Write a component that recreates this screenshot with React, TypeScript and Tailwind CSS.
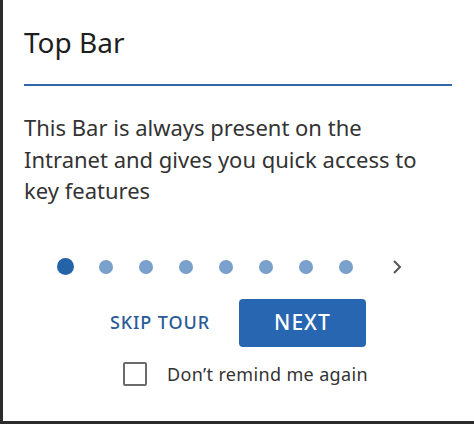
import { useState } from "react";

const font = { fontFamily: '"Noto Sans", "Open Sans", Arial, sans-serif' };

export default function App() {
    const [remind, setRemind] = useState(false);
    const dots = [0, 1, 2, 3, 4, 5, 6, 7];

    return (
        <div
            className="w-[474px] h-[424px] bg-white border-l-[3px] border-b-[3px] border-[#2b2b2b] pl-[21px] pr-[22px] text-[#2a2a2a]"
            style={font}
        >
            {/* Header */}
            <h2 className="pt-[22px] text-[28px] leading-[40px] text-[#1e1e1e]">Top Bar</h2>
            <div className="mt-[22px] h-[2px] bg-[#2f67a8]" />

            {/* Body */}
            <p className="mt-[26px] max-w-[412px] text-[22px] leading-[31.5px] text-[#333]">
                This Bar is always present on the Intranet and gives you quick access to key features
            </p>

            {/* Step dots */}
            <div className="mt-[51px] flex items-center h-[18px] pl-[33px]">
                {dots.map((i) =>
                    i === 0 ? (
                        <span key={i} className="w-[17px] h-[17px] rounded-full bg-[#2563a8] mr-[25px]" />
                    ) : (
                        <span key={i} className="w-[14px] h-[14px] rounded-full bg-[#7aa0cc] mr-[26px]" />
                    )
                )}
                <svg className="ml-[12px]" width="12" height="16" viewBox="0 0 12 16" fill="none">
                    <path d="M3 2 L9 8 L3 14" stroke="#555" strokeWidth="2" />
                </svg>
            </div>

            {/* Actions */}
            <div className="mt-[23px] flex items-center pl-[86px]">
                <button className="text-[18px] font-medium text-[#2a5a98] tracking-[0.9px]">SKIP TOUR</button>
                <button className="ml-[29px] w-[127px] h-[48px] rounded-[4px] bg-[#2966b1] text-white text-[21px] font-medium tracking-[1px]">
                    NEXT
                </button>
            </div>

            <label className="mt-[14px] flex items-center pl-[99px] cursor-pointer">
                <input
                    type="checkbox"
                    checked={remind}
                    onChange={(e) => setRemind(e.target.checked)}
                    className="appearance-none w-[24px] h-[24px] border-2 border-[#6b6b6b] rounded-[2px] checked:bg-[#2966b1]"
                />
                <span className="ml-[20px] text-[18px] tracking-[0.35px] text-[#333]">Don’t remind me again</span>
            </label>
        </div>
    );
}
